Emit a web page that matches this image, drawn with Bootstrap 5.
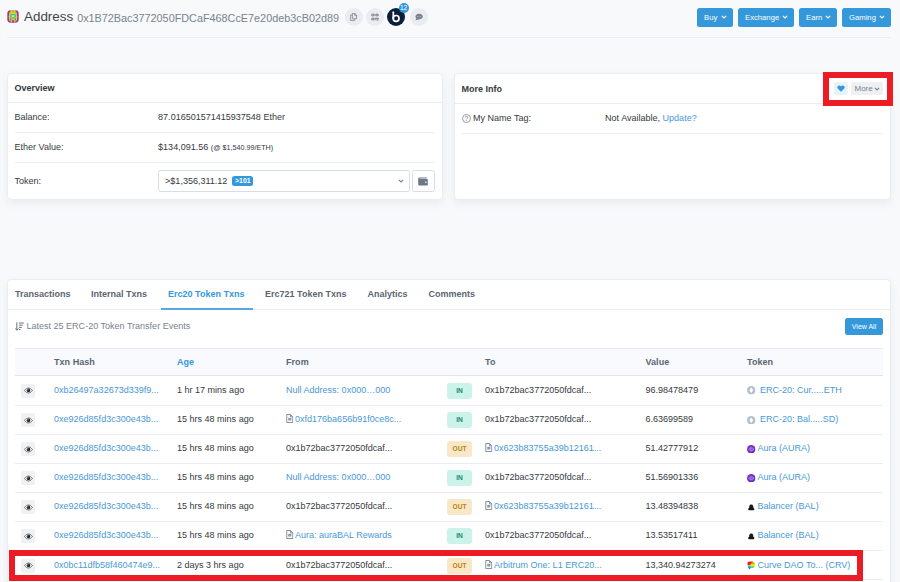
<!DOCTYPE html>
<html lang="en">
<head>
<meta charset="utf-8">
<title>Address 0x1B72Bac3772050FDCaF468CcE7e20deb3cB02d89</title>
<link href="https://cdn.jsdelivr.net/npm/bootstrap@5.3.0/dist/css/bootstrap.min.css" rel="stylesheet">
<style>
html,body{height:582px;overflow:hidden}
body{background:#f8f9fb;font:9.03px/14px "Liberation Sans",Arial,sans-serif;color:#343a40;position:relative}
a{color:#4a98d6;text-decoration:none}
svg{display:block;flex:none}
.topbar{height:38px;margin:0 9px 0 7px;border-bottom:1px solid #eceff2;padding-bottom:3px}
.title-text{font-size:13.4px;color:#3f4549;margin-left:5px}
.addr-text{font-size:10.84px;color:#77838f;margin-left:4px;width:262px;white-space:nowrap;padding-top:1px}
.round-btn{width:18px;height:18px;background:#ebecf0;color:#77838f}
.count-badge{position:absolute;left:12px;top:-5px;width:10px;height:10px;font-size:6.6px;line-height:10px;background:#3498db}
.brand-b{width:18px;height:18px;background:#0a1f3c;color:#fff;position:relative}
.btn-blue{background:#3498db;color:#fff;font-size:7.7px;line-height:19px;height:19px;padding:0 6px 0 7px;border:0;border-radius:2.5px;display:flex;align-items:center;justify-content:space-between}
.panel{background:#fff;border:1px solid #eaedf4;border-radius:4px;box-shadow:0 4px 9px rgba(140,152,164,.13)}
.pair{margin:35px 9px 0 6.5px;gap:11px;height:127px}
.panel-head{height:29px;border-bottom:1px solid #e9ecf3;padding:0 7px;font-weight:bold}
.line-row{margin:0 7px;height:30px;border-bottom:1px solid #eceef3;padding-bottom:1px}
.lbl{width:143.6px;flex:none}
.token-select{width:252px;height:22px;border:1px solid #d8dde6;border-radius:2.5px;padding:0 5px 0 6px}
.pill{background:#3498db;color:#fff;font-weight:bold;font-size:6.9px;line-height:10px;height:10px;width:21px;border-radius:2.5px;text-align:center;margin-left:5px}
.wallet-btn{width:23px;height:22px;border:1px solid #d8dde6;border-radius:2.5px;margin-left:2px}
.heart-btn{width:14px;height:13px;background:#e7f2fb;border-radius:2px}
.more-btn{width:32px;height:13px;background:#eff0f2;color:#77838f;border-radius:2px;font-weight:normal;font-size:8px;padding:0 3px 0 4px}
.txns{margin:79px 9px 0 6.5px;height:330px;border-bottom-left-radius:0;border-bottom-right-radius:0}
.tabs{height:30px;border-bottom:1px solid #e9ecf3;font-weight:bold}
.tabs a{color:#5b6672;height:30px;line-height:28px;padding:0 0 0 7.5px;margin-right:5px;border-bottom:2px solid transparent;white-space:nowrap}
.tabs a.on{color:#3498db;border-color:#56a8e0}
.sub{height:33px;padding:0 7px;color:#77838f}
.tx{table-layout:fixed;width:868px;margin:5px 0 0 7.5px;border-collapse:separate;border-spacing:0}
.tx th{height:28px;background:#f8fafd;border-top:1px solid #e7eaf3;border-bottom:1px solid #dfe4ee;color:#5b6672;padding:0 0 1px;letter-spacing:.04px}
.tx td{height:29.1px;border-bottom:1px solid #e9ecf3;padding:0 0 1.6px;white-space:nowrap;vertical-align:middle}
.tx tr:first-child td{height:29.8px}
.tx .eye{width:14px;height:14px;background:#f0f1f3;border-radius:2px;margin:2px 0 0 6px}
.dir{display:block;width:25px;height:16px;border-radius:3px;font-size:6.6px;font-weight:bold;line-height:16px;text-align:center;margin-top:2px}
.in{background:#ccf3ea;color:#17886b}
.out{background:#f9e8c7;color:#b98117}
.ic{display:inline-block;vertical-align:-1px;margin-right:1.5px}
.tk{display:inline-block;vertical-align:-2px;margin-right:2px}
.tk.wide{margin-right:4.5px}
.mark-box{position:absolute;border:solid #ed1c24;pointer-events:none}
</style>
<script src="https://cdn.jsdelivr.net/npm/bootstrap@5.3.0/dist/js/bootstrap.bundle.min.js"></script>
</head>
<body>
<svg width="0" height="0" class="position-absolute">
<symbol id="chev" viewBox="0 0 6 4"><path d="M.8.8 3 3 5.2.8" fill="none" stroke="currentColor" stroke-width="1.1"/></symbol>
<symbol id="doc" viewBox="0 0 7 9"><path d="M.5.5h3.8l2.2 2.2v5.8h-6zM4.2.5v2.3h2.3M2 4.4h3M2 6h3M2 5.2h3" fill="none" stroke="#77838f" stroke-width=".9"/></symbol>
<symbol id="eye" viewBox="0 0 9 7"><path d="M.4 3.5Q4.5-1.7 8.6 3.5 4.5 8.7.4 3.5z" fill="none" stroke="#4a5056" stroke-width=".7"/><circle cx="4.5" cy="3.4" r="1.8" fill="#22272b"/><circle cx="3.9" cy="2.8" r=".5" fill="#ccc"/></symbol>
<symbol id="eth" viewBox="0 0 8 8"><circle cx="4" cy="4" r="4" fill="#b6bfce"/><path d="M4 1.3 5.8 4 4 6.7 2.2 4z" fill="#fff"/></symbol>
<symbol id="aura" viewBox="0 0 8 8"><circle cx="4" cy="4" r="4" fill="#6f32c8"/><path d="M1.4 4Q4 1 6.6 4 4 7 1.4 4z" fill="none" stroke="#c9a9f2" stroke-width=".6"/><circle cx="4" cy="4" r="1" fill="none" stroke="#c9a9f2" stroke-width=".5"/></symbol>
<symbol id="bal" viewBox="0 0 8 8"><ellipse cx="4" cy="2.6" rx="1.6" ry="1.2" fill="#151515"/><ellipse cx="4" cy="4.1" rx="2.2" ry="1.4" fill="#1b1b1b"/><rect x="1.1" y="4.7" width="5.8" height="2.1" rx=".9" fill="#151515"/></symbol>
<symbol id="crv" viewBox="0 0 9 9"><path d="M.5 1.2 2.4.4 6 .4 6.4 3 3.6 4.6.6 4.6z" fill="#e8202a"/><path d="M5.4.6 7.6 1.6 8.6 3.8 6 4.5 4.2 3.4z" fill="#ff9d00"/><path d="M3 4 5.3 3.2l3.4.6-.8 2.2L5.3 6.3 3.4 6z" fill="#e9ed16"/><path d="M3.2 5.6 8 5.6 6.6 7.3 4 7.4z" fill="#44df65"/><path d="M.8 5 3.4 4.8 4.2 7 2.8 8.8 1.3 7.2z" fill="#16bcf0"/><path d="m1.3 7 2.4-.1-.9 2z" fill="#3156e8"/></symbol>
</svg>

<header class="topbar d-flex align-items-center">
  <svg width="12" height="13" viewBox="0 0 12 13" style="margin-top:-2px"><rect x=".3" y=".3" width="11.4" height="12.4" rx="3.4" fill="#a92fa4"/><path d="M3.4.3h5.2v2.5H3.4zM2 2.4h8v8.2H2zM3.6 10h1.2v2.6H3.6zM7.2 10h1.2v2.6H7.2z" fill="#c3e32b"/><path d="M5 1.2h2v1H5zM2.2 3.6h1.4v1H2.2zM8.4 3.6h1.4v1H8.4zM.3 6h1.4v1H.3zM10.3 6h1.4v1h-1.4z" fill="#d08a35"/><path d="M3.8 4h4.4v1.3H3.8zM3 5.2h1.4v2H3zM7.6 5.2H9v2H7.6zM4.4 7.2h3.2v1.2H4.4z" fill="#37b9bd"/><path d="M4.8 5.4h2.4v1.5H4.8z" fill="#e3e24a"/><path d="M3 8.6h1.4v1.2H3zM7.6 8.6H9v1.2H7.6zM5.2 10.4h1.6v1.4H5.2z" fill="#a92fa4"/></svg>
  <span class="title-text">Address</span>
  <span class="addr-text">0x1B72Bac3772050FDCaF468CcE7e20deb3cB02d89</span>
  <div class="d-flex align-items-center" style="gap:3px;margin-left:5.5px">
    <span class="round-btn rounded-circle d-flex align-items-center justify-content-center"><svg width="7" height="8" viewBox="0 0 7 8"><path d="M2.4.5h2.5l1.6 1.6v3.6H2.4zM4.7.5v1.8h1.8M2.2 2H.6v5.4h4.1V6" fill="none" stroke="currentColor" stroke-width=".8"/></svg></span>
    <span class="round-btn rounded-circle d-flex align-items-center justify-content-center"><svg width="8" height="8" viewBox="0 0 8 8"><path d="M.8 1.2h2.4v1.6H.8zM4.8 1.2h2.4v1.6H4.8zM.8 5.2h2.4v1.6H.8zM4.8 4.8v2.4M4.6 5.2h1.6v1h1V4.8M5.8 7h1.6" fill="none" stroke="currentColor" stroke-width="1"/></svg></span>
    <span class="brand-b rounded-circle"><svg width="18" height="18" viewBox="0 0 18 18"><path d="M6.3 4.2v6.4" stroke="#fff" stroke-width="1.7" stroke-linecap="round"/><circle cx="9.1" cy="10.4" r="2.9" fill="none" stroke="#fff" stroke-width="1.7"/></svg><span class="count-badge rounded-circle d-flex justify-content-center">12</span></span>
    <span class="round-btn rounded-circle d-flex align-items-center justify-content-center" style="margin-left:2px"><svg width="8" height="8" viewBox="0 0 8 8"><path d="M4 .7C6.3.7 7.8 1.8 7.8 3.6S6.2 6.4 4 6.4L.4 7.3 1.3 5.5C-.6 3.6.9.7 4 .7z" fill="currentColor"/><path d="M2 3.6h.8M3.7 3.6h.8M5.4 3.6h.8" stroke="#ebecf0" stroke-width=".6"/></svg></span>
  </div>
  <nav class="ms-auto d-flex" style="gap:5px">
    <button class="btn-blue" style="width:36px">Buy<svg width="6" height="4"><use href="#chev"/></svg></button>
    <button class="btn-blue" style="width:56px">Exchange<svg width="6" height="4"><use href="#chev"/></svg></button>
    <button class="btn-blue" style="width:38px">Earn<svg width="6" height="4"><use href="#chev"/></svg></button>
    <button class="btn-blue" style="width:49px">Gaming<svg width="6" height="4"><use href="#chev"/></svg></button>
  </nav>
</header>

<main>
  <div class="pair d-flex">
    <section class="panel" style="width:436px">
      <div class="panel-head d-flex align-items-center">Overview</div>
      <div class="line-row d-flex align-items-center"><span class="lbl">Balance:</span><span>87.016501571415937548 Ether</span></div>
      <div class="line-row d-flex align-items-center"><span class="lbl">Ether Value:</span><span>$134,091.56 <span style="font-size:7.2px">(@ $1,540.99/ETH)</span></span></div>
      <div class="line-row d-flex align-items-center border-0 pb-0" style="height:36px"><span class="lbl">Token:</span>
        <div class="token-select d-flex align-items-center"><span>&gt;$1,356,311.12</span><span class="pill">&gt;101</span><svg class="ms-auto" width="6" height="4" color="#77838f"><use href="#chev"/></svg></div>
        <div class="wallet-btn d-flex align-items-center justify-content-center"><svg width="10" height="9" viewBox="0 0 10 9"><path d="M1.3.5h7.5v1H1.5V2h7.6q.7 0 .7.7v5q0 .8-.8.8H1.2q-1 0-1-1v-6q0-1 1.1-1z" fill="#6c7886"/><circle cx="7.8" cy="5.2" r=".8" fill="#fff"/></svg></div>
      </div>
    </section>
    <section class="panel flex-fill">
      <div class="panel-head d-flex align-items-center" style="height:30px"><span>More Info</span>
        <span class="heart-btn d-flex align-items-center justify-content-center ms-auto"><svg width="8" height="7" viewBox="0 0 8 7"><path d="M4 6.8.7 3.5C-.8 1.4 2-.8 4 1.2 6-.8 8.8 1.4 7.3 3.5z" fill="#3498db"/></svg></span>
        <span class="more-btn d-flex align-items-center justify-content-between" style="margin:0 .5px 0 2.5px">More<svg width="6" height="4"><use href="#chev"/></svg></span>
      </div>
      <div class="line-row d-flex align-items-center"><span class="lbl d-flex align-items-center"><svg width="9" height="9" viewBox="0 0 9 9" style="margin-right:2.5px"><circle cx="4.5" cy="4.5" r="4" fill="none" stroke="#77838f" stroke-width=".8"/><path d="M3.2 3.6C3.3 2 5.9 2.1 5.8 3.6 5.7 4.5 4.5 4.4 4.5 5.3M4.5 6v.9" fill="none" stroke="#77838f" stroke-width=".8"/></svg>My Name Tag:</span><span>Not Available, <a href="#">Update?</a></span></div>
    </section>
  </div>

  <section class="panel txns">
    <nav class="tabs d-flex">
      <a href="#" style="width:71px">Transactions</a><a href="#" style="width:72px">Internal Txns</a><a href="#" class="on" style="width:92px">Erc20 Token Txns</a><a href="#" style="width:97.5px">Erc721 Token Txns</a><a href="#" style="width:56px">Analytics</a><a href="#">Comments</a>
    </nav>
    <div class="sub d-flex align-items-center">
      <svg width="9" height="9" viewBox="0 0 9 9" style="margin-right:3px"><path d="M1.8.4v7.8M.3 6.4l1.5 1.8 1.5-1.8M4 1h4.8M4 3.2h3.8M4 5.4h2.8M4 7.6h1.6" fill="none" stroke="#68747f" stroke-width="1"/></svg>
      <span style="padding-bottom:1px">Latest 25 ERC-20 Token Transfer Events</span>
      <button class="btn-blue ms-auto justify-content-center" style="width:38px;height:17px;font-size:7px;padding:0">View All</button>
    </div>
    <table class="tx">
      <colgroup><col style="width:39px"><col style="width:123px"><col style="width:109px"><col style="width:161px"><col style="width:38px"><col style="width:160.5px"><col style="width:101.5px"><col style="width:136px"></colgroup>
      <thead><tr><th></th><th>Txn Hash</th><th style="color:#3498db">Age</th><th>From</th><th></th><th>To</th><th>Value</th><th>Token</th></tr></thead>
      <tbody id="rows"></tbody>
    </table>
  </section>
</main>
<div class="mark-box" style="left:823px;top:72px;width:70px;height:34px;border-width:6px"></div>
<div class="mark-box" style="left:9px;top:550px;width:854px;height:31px;border-width:6px"></div>
<script>
// Each row: hash, age, from, from kind, direction, to, to kind, value, token icon, token name
const ME='0x1b72bac3772050fdcaf...', E='0xe926d85fd3c300e43b...', H='15 hrs 48 mins ago';
const data=[
['0xb26497a32673d339f9...','1 hr 17 mins ago','Null Address: 0x000…000','link','IN',ME,'','96.98478479','eth','ERC-20: Cur.....ETH'],
[E,H,'0xfd176ba656b91f0ce8c...','doc','IN',ME,'','6.63699589','eth','ERC-20: Bal.....SD)'],
[E,H,ME,'','OUT','0x623b83755a39b12161...','doc','51.42777912','aura','Aura (AURA)'],
[E,H,'Null Address: 0x000…000','link','IN',ME,'','51.56901336','aura','Aura (AURA)'],
[E,H,ME,'','OUT','0x623b83755a39b12161...','doc','13.48394838','bal','Balancer (BAL)'],
[E,H,'Aura: auraBAL Rewards','doc','IN',ME,'','13.53517411','bal','Balancer (BAL)'],
['0x0bc11dfb58f460474e9...','2 days 3 hrs ago',ME,'','OUT','Arbitrum One: L1 ERC20...','doc','13,340.94273274','crv','Curve DAO To... (CRV)']];
const party=(t,k)=>k?`<a href="#">${k==='doc'?'<svg class="ic" width="7.5" height="9"><use href="#doc"/></svg>':''}${t}</a>`:`<span>${t}</span>`;
document.getElementById('rows').innerHTML=data.map(r=>`<tr>
<td><div class="eye d-flex align-items-center justify-content-center"><svg width="9" height="7"><use href="#eye"/></svg></div></td>
<td><a href="#">${r[0]}</a></td><td><span>${r[1]}</span></td><td>${party(r[2],r[3])}</td>
<td><span class="dir ${r[4].toLowerCase()}">${r[4]}</span></td><td>${party(r[5],r[6])}</td><td><span>${r[7]}</span></td>
<td><a href="#"><svg class="tk${r[8]==='eth'?' wide':''}" width="8.5" height="8.5"><use href="#${r[8]}"/></svg>${r[9]}</a></td></tr>`).join('');
</script>
</body>
</html>
